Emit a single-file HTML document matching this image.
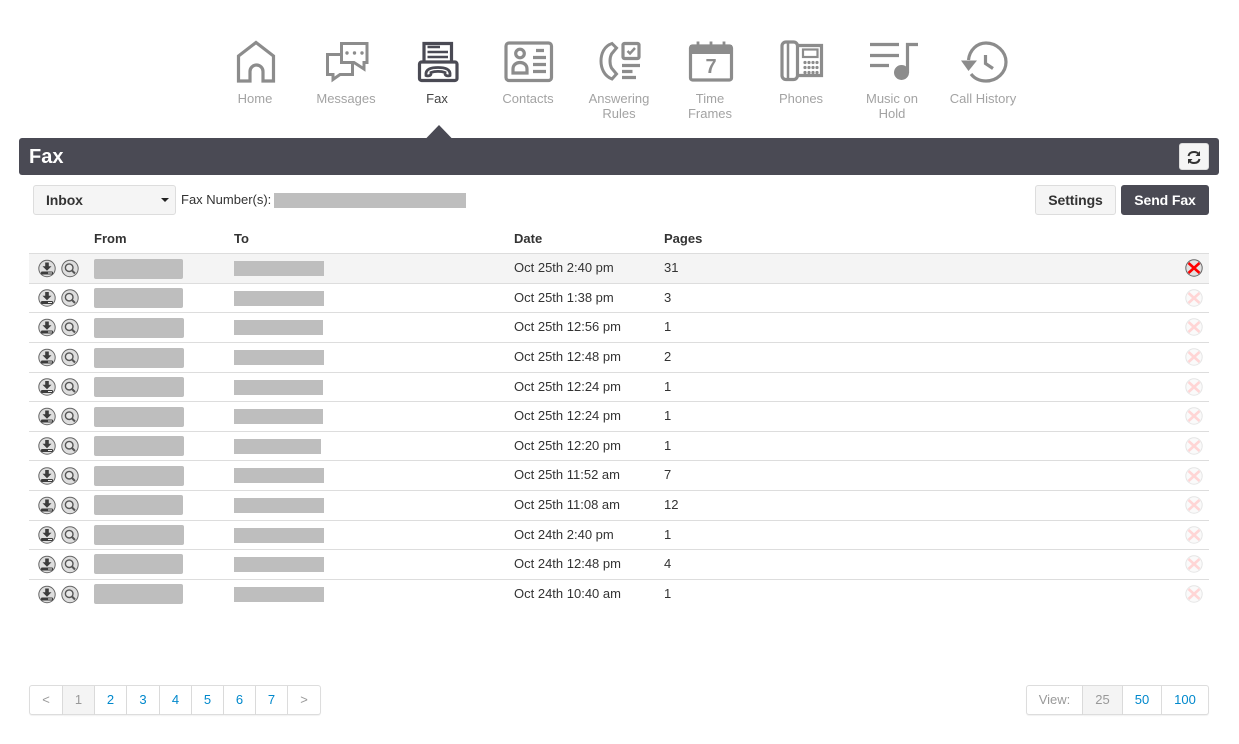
<!DOCTYPE html>
<html><head><meta charset="utf-8"><title>Fax</title>
<style>
html,body{margin:0;padding:0;background:#fff}
body{width:1239px;height:744px;position:relative;overflow:hidden;font:13px/15px "Liberation Sans",Arial,sans-serif;color:#333}
.a,.l,.r,.r>*{position:absolute}
.l{top:91px;width:100px;text-align:center;color:#a3a3a3;line-height:15px}
.bar{left:19px;top:138px;width:1200px;height:37px;background:#4a4a54;border-radius:3px}
.btn{box-sizing:border-box;border:1px solid #ddd;border-radius:3px;background:#f5f5f5;font-weight:bold;font-size:14px;letter-spacing:-.1px;text-align:center;color:#333}
.h{top:231px;font-weight:bold;color:#333}
.r{left:29px;width:1180px;border-top:1px solid #ddd;box-sizing:border-box}
.f{left:65px;background:#bebebe;height:20px;border-radius:2px;top:5px}
.t{left:205px;background:#bebebe;height:15px;top:7px}
.d{left:485px;top:6px;color:#333}
.p{left:635px;top:6px;color:#333}
.pg{box-sizing:border-box;top:685px;height:30px;border:1px solid #ddd;border-left:0;text-align:center;line-height:28px;font-size:13px;color:#0088cc;background:#fff;box-shadow:0 1px 1px rgba(0,0,0,.06)}
.gr{color:#999}.on{background:#f4f4f4;color:#999}
svg.i{position:absolute;left:0;top:0}
</style></head><body>

<svg class="i" width="1239" height="744" viewBox="0 0 1239 744" fill="none" stroke="#8c8c8c" stroke-width="3.2">
<!-- Home -->
<path d="M238.5 81V56L256 42.5 273.5 56V81H263V71.5a6.5 6.5 0 0 0-13 0V81Z"/>
<!-- Messages -->
<path d="M341.500 43.500H367V62.500H364V69L354 62.500H341.500Z" stroke-width="3"/>
<path d="M341 54.500H327.500V74.500H333V79.500L340 74.500H352.500V63" stroke-width="3"/>
<g fill="#8c8c8c" stroke="none"><circle cx="347" cy="53" r="1.700"/><circle cx="354.500" cy="53" r="1.700"/><circle cx="362" cy="53" r="1.700"/></g>
<!-- Fax -->
<g stroke="#4a4a54">
<path d="M424 62V43.500H451.500V62"/>
<rect x="419.500" y="62" width="37.500" height="18.500" rx="2"/>
<path d="M427.500 47H440M427.500 52H448M427.500 57H448" stroke-width="2.500"/>
<path d="M426 75.500C425 68.500 432 67.500 438 67.500S451 68.500 450 75.500C447 76.500 444.500 75.500 445 72.500C441 71 435 71 431 72.500C431.500 75.500 429 76.500 426 75.500Z" stroke-width="2.800"/>
</g>
<!-- Contacts -->
<rect x="506" y="43" width="45.500" height="37.500" rx="3"/>
<circle cx="520" cy="53.500" r="4.300"/>
<path d="M513 73V69C513 65 516 62.500 520 62.500S527 65 527 69V73Z"/>
<path d="M536 50.500H544M533 57.500H546M533 64.500H546M533 71.500H546"/>
<!-- Answering -->
<path d="M612 43.500L616.500 48 611.500 54C609.500 58 609.500 64 611.500 68L616.500 74 612 79C604 76 601 68 601 61S604 46 612 43.500Z" stroke-width="3"/>
<rect x="623" y="43.500" width="16" height="15" rx="1.500"/>
<path d="M627.500 51L630 53.500 635 48" stroke-width="2.500"/>
<path d="M622 65.500H640M622 71.500H632.500M622 77.500H636"/>
<!-- Calendar -->
<rect x="690.500" y="46" width="41" height="34" rx="2"/>
<rect x="690" y="45" width="42" height="9" fill="#8c8c8c" stroke="none"/>
<path d="M698 41.500V46M711 41.500V46M724 41.500V46" stroke-width="2.800"/>
<text x="711" y="73" text-anchor="middle" fill="#8c8c8c" stroke="none" font-family="Liberation Sans" font-weight="bold" font-size="20">7</text>
<!-- Phones -->
<path d="M797 45.500H821.500V75.500H797"/>
<rect x="782" y="42" width="15.500" height="37.500" rx="4"/>
<path d="M788 42.500V79" stroke-width="2.500"/>
<rect x="803" y="49.500" width="14.500" height="7.500" stroke-width="2.200"/>
<g fill="#8c8c8c" stroke="none">
<circle cx="805" cy="62.500" r="1.600"/><circle cx="809" cy="62.500" r="1.600"/><circle cx="813" cy="62.500" r="1.600"/><circle cx="817" cy="62.500" r="1.600"/>
<circle cx="805" cy="67.500" r="1.600"/><circle cx="809" cy="67.500" r="1.600"/><circle cx="813" cy="67.500" r="1.600"/><circle cx="817" cy="67.500" r="1.600"/>
<circle cx="805" cy="72.500" r="1.600"/><circle cx="809" cy="72.500" r="1.600"/><circle cx="813" cy="72.500" r="1.600"/><circle cx="817" cy="72.500" r="1.600"/>
</g>
<!-- Music -->
<path d="M870 44.500H899M870 55.500H899M870 65.500H889"/>
<path d="M918 44.500H907.500V73"/>
<circle cx="901.500" cy="72.500" r="7.500" fill="#8c8c8c" stroke="none"/>
<!-- History -->
<path d="M968.500 60C969.500 50 977 43 986 43C996.500 43 1006 51.500 1006 62S997 81 986 81C980 81 974.500 78.500 971 74"/>
<path d="M961 60.500H977L968.500 71Z" fill="#8c8c8c" stroke="none"/>
<path d="M985.500 55V63.500L993 68.500"/>
<!-- Tab pointer -->
<path d="M426 138.500L439 125 452 138.500Z" fill="#4a4a54" stroke="none"/>
</svg>

<div class="l" style="left:205px">Home</div>
<div class="l" style="left:296px">Messages</div>
<div class="l" style="left:387px;color:#444">Fax</div>
<div class="l" style="left:478px">Contacts</div>
<div class="l" style="left:569px">Answering<br>Rules</div>
<div class="l" style="left:660px">Time<br>Frames</div>
<div class="l" style="left:751px">Phones</div>
<div class="l" style="left:842px">Music on<br>Hold</div>
<div class="l" style="left:933px">Call History</div>

<div class="a bar"></div>
<div class="a" style="left:29px;top:145px;font-size:20px;line-height:24px;font-weight:bold;color:#fff">Fax</div>
<div class="a btn" style="left:1179px;top:143px;width:30px;height:27px"></div>
<svg class="i" style="left:1179px;top:143px" width="30" height="27" fill="none" stroke="#333" stroke-width="2">
<path d="M9.500 13C10 10.500 12 9 15 9C17 9 18.500 9.500 19.800 11"/>
<path d="M20.500 16C20 18.500 18 20 15 20C13 20 11.500 19.500 10.200 18"/>
<path d="M21 8V13H16.500Z M9 21V16H13.500Z" fill="#333" stroke="none"/>
</svg>

<div class="a btn" style="left:33px;top:185px;width:143px;height:30px;line-height:28px;text-align:left;padding-left:12px">Inbox</div>
<svg class="i" style="left:161px;top:198px" width="9" height="5"><path d="M0 0H8L4 4Z" fill="#222"/></svg>
<div class="a" style="left:181px;top:192px;color:#333">Fax Number(s):</div>
<div class="a" style="left:274px;top:193px;width:192px;height:15px;background:#bebebe"></div>
<div class="a btn" style="left:1035px;top:185px;width:81px;height:30px;line-height:28px">Settings</div>
<div class="a btn" style="left:1121px;top:185px;width:88px;height:30px;line-height:28px;background:#4a4a54;border-color:#4a4a54;color:#fff">Send Fax</div>

<div class="a h" style="left:94px">From</div>
<div class="a h" style="left:234px">To</div>
<div class="a h" style="left:514px">Date</div>
<div class="a h" style="left:664px">Pages</div>

<div class="r" style="top:253px;height:30px;background:#f4f4f4"><b class="f" style="width:89px"></b><b class="t" style="width:90px"></b><span class="d">Oct 25th 2:40 pm</span><span class="p">31</span></div>
<div class="r" style="top:283px;height:30px"><b class="f" style="width:89px;top:4px"></b><b class="t" style="width:90px"></b><span class="d">Oct 25th 1:38 pm</span><span class="p">3</span></div>
<div class="r" style="top:312px;height:31px"><b class="f" style="width:90px"></b><b class="t" style="width:89px"></b><span class="d">Oct 25th 12:56 pm</span><span class="p">1</span></div>
<div class="r" style="top:342px;height:31px"><b class="f" style="width:90px"></b><b class="t" style="width:90px"></b><span class="d">Oct 25th 12:48 pm</span><span class="p">2</span></div>
<div class="r" style="top:372px;height:30px"><b class="f" style="width:90px;top:4px"></b><b class="t" style="width:89px"></b><span class="d">Oct 25th 12:24 pm</span><span class="p">1</span></div>
<div class="r" style="top:401px;height:31px"><b class="f" style="width:90px"></b><b class="t" style="width:89px"></b><span class="d">Oct 25th 12:24 pm</span><span class="p">1</span></div>
<div class="r" style="top:431px;height:30px"><b class="f" style="width:90px;top:4px"></b><b class="t" style="width:87px"></b><span class="d">Oct 25th 12:20 pm</span><span class="p">1</span></div>
<div class="r" style="top:460px;height:31px"><b class="f" style="width:90px"></b><b class="t" style="width:90px"></b><span class="d">Oct 25th 11:52 am</span><span class="p">7</span></div>
<div class="r" style="top:490px;height:31px"><b class="f" style="width:89px;top:4px"></b><b class="t" style="width:90px"></b><span class="d">Oct 25th 11:08 am</span><span class="p">12</span></div>
<div class="r" style="top:520px;height:30px"><b class="f" style="width:90px;top:4px"></b><b class="t" style="width:90px"></b><span class="d">Oct 24th 2:40 pm</span><span class="p">1</span></div>
<div class="r" style="top:549px;height:31px"><b class="f" style="width:89px;top:4px"></b><b class="t" style="width:90px"></b><span class="d">Oct 24th 12:48 pm</span><span class="p">4</span></div>
<div class="r" style="top:579px;height:31px"><b class="f" style="width:89px;top:4px"></b><b class="t" style="width:90px"></b><span class="d">Oct 24th 10:40 am</span><span class="p">1</span></div>

<svg class="i" width="1239" height="744" viewBox="0 0 1239 744">
<defs>
<g id="dl">
<circle cx="47" cy="0" r="8.200" fill="#dedede" stroke="#666" stroke-width="1"/>
<path d="M45.200-6H48.800V-2.200H51.500L47 2.200 42.500-2.200H45.200Z" fill="#3c3c3c"/>
<rect x="41" y="3" width="12" height="3" rx="1" fill="#3c3c3c"/><rect x="48" y="4" width="4" height="1" fill="#eee"/>
<circle cx="70" cy="0" r="8.200" fill="#dedede" stroke="#666" stroke-width="1"/>
<circle cx="69.200" cy="-0.800" r="3.800" fill="#e8e8e8" stroke="#555" stroke-width="1.400"/>
<path d="M72 2L75 5" stroke="#555" stroke-width="2"/>
</g>
<g id="x">
<circle cx="1194" cy="0" r="8.200" fill="#e2e2e2" stroke="#666" stroke-width="1"/>
<path d="M1188.500-5L1199.500 5M1199.500-5L1188.500 5" stroke="#f00" stroke-width="2.600"/>
</g>
</defs>
<use href="#dl" y="268.500"/><use href="#dl" y="298"/><use href="#dl" y="327.500"/><use href="#dl" y="357.500"/><use href="#dl" y="387"/><use href="#dl" y="416.500"/><use href="#dl" y="446"/><use href="#dl" y="476"/><use href="#dl" y="505.500"/><use href="#dl" y="535"/><use href="#dl" y="564.500"/><use href="#dl" y="594.500"/>
<use href="#x" y="268"/>
<g opacity=".16"><use href="#x" y="298"/><use href="#x" y="327"/><use href="#x" y="357"/><use href="#x" y="387"/><use href="#x" y="416"/><use href="#x" y="446"/><use href="#x" y="476"/><use href="#x" y="505"/><use href="#x" y="535"/><use href="#x" y="564"/><use href="#x" y="594"/></g>
</svg>

<div class="a pg gr" style="left:29px;width:34px;border-left:1px solid #ddd;border-radius:3px 0 0 3px">&lt;</div>
<div class="a pg on" style="left:63px;width:32px">1</div>
<div class="a pg" style="left:95px;width:32px">2</div>
<div class="a pg" style="left:127px;width:33px">3</div>
<div class="a pg" style="left:160px;width:32px">4</div>
<div class="a pg" style="left:192px;width:32px">5</div>
<div class="a pg" style="left:224px;width:32px">6</div>
<div class="a pg" style="left:256px;width:32px">7</div>
<div class="a pg gr" style="left:288px;width:33px;border-radius:0 3px 3px 0">&gt;</div>

<div class="a pg gr" style="left:1026px;width:57px;border-left:1px solid #ddd;border-radius:3px 0 0 3px">View:</div>
<div class="a pg on" style="left:1083px;width:40px">25</div>
<div class="a pg" style="left:1123px;width:39px">50</div>
<div class="a pg" style="left:1162px;width:47px;border-radius:0 3px 3px 0">100</div>
</body></html>
